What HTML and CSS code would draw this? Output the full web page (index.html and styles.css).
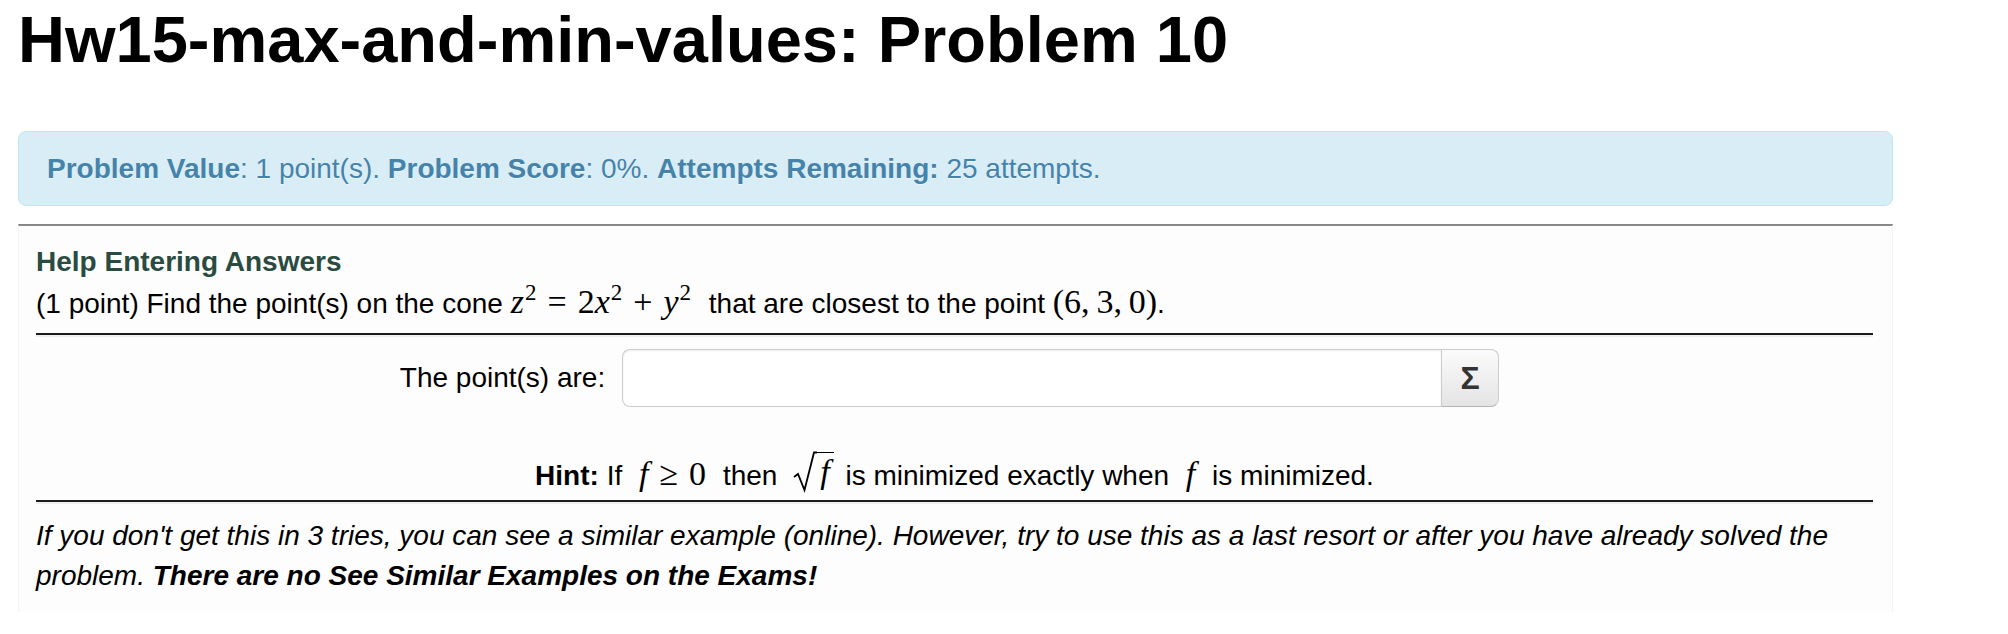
FILE: index.html
```html
<!DOCTYPE html>
<html>
<head>
<meta charset="utf-8">
<link rel="stylesheet" href="styles.css">
</head>
<body>
<div class="page">
  <h1 class="title">Hw15-max-and-min-values: Problem 10</h1>
  <div class="alert">
    <b>Problem Value</b>: 1 point(s). <b>Problem Score</b>: 0%. <b>Attempts Remaining:</b> 25 attempts.
  </div>
  <div class="problem">
    <div class="help">Help Entering Answers</div>
    <div class="line">(1 point) Find the point(s) on the cone <span class="math cone"><i>z</i><sup>2</sup><span class="op">=</span>2<i>x</i><sup>2</sup><span class="op">+</span><i>y</i><sup>2</sup></span> that are closest to the point <span class="math">(6,&thinsp;3,&thinsp;0)</span>.</div>
    <div class="rule"></div>
    <div class="answer">
      <label class="label">The point(s) are:</label>
      <div class="inputgroup">
        <div class="input"></div>
        <div class="sigma">Σ</div>
      </div>
    </div>
    <div class="hint"><b>Hint:</b> If <span class="math sp"><i>f</i><span class="op">≥</span>0</span> then <span class="math sqrt"><svg class="rad" width="24" height="44" viewBox="0 0 24 44"><path d="M1 26 L5 23 L11.5 39 L21 1.5 L24 1.5" fill="none" stroke="#000" stroke-width="1.8"/></svg><span class="under"><i>f</i></span></span> is minimized exactly when <span class="math sp"><i>f</i></span> is minimized.</div>
    <div class="rule"></div>
    <p class="note">If you don't get this in 3 tries, you can see a similar example (online). However, try to use this as a last resort or after you have already solved the problem. <b>There are no See Similar Examples on the Exams!</b></p>
  </div>
</div>
</body>
</html>
```

FILE: styles.css
```css
html, body {
  margin: 0;
  padding: 0;
  background: #fff;
}
body {
  font-family: "Liberation Sans", Arial, Helvetica, sans-serif;
  font-size: 28px;
  line-height: 40px;
  color: #000;
}
.page {
  padding: 4px 0 0 18px;
  width: 1875px;
}
.title {
  margin: 0;
  font-size: 65px;
  line-height: 72px;
  font-weight: bold;
  color: #000;
}
.alert {
  margin-top: 55px;
  background: #d9edf7;
  border: 1px solid #bce8f1;
  border-radius: 8px;
  padding: 17px 28px 16px 28px;
  color: #4583aa;
  text-shadow: 0 1px 0 rgba(255,255,255,0.5);
}
.alert b { font-weight: bold; }
.problem {
  margin-top: 18px;
  border-top: 2px solid #888;
  border-left: 1px solid #f3f3f3;
  border-right: 1px solid #f3f3f3;
  background: #fdfdfd;
  padding: 16px 19px 16px 17px;
}
.help {
  font-weight: bold;
  color: #2a4b3f;
}
.math {
  font-family: "Liberation Serif", "Times New Roman", serif;
  font-size: 34px;
}
.math i { font-style: italic; }
.math sup {
  font-size: 23px;
  line-height: 0;
  vertical-align: 13px;
  margin-left: 1px;
}
.cone { margin-right: 10px; }
.op { margin: 0 11px; font-style: normal; }
.sp { margin: 0 9px; }
.rule {
  height: 2px;
  background: #1c1c1c;
  border-bottom: 2px solid #efefef;
  margin-top: 9px;
}
.answer {
  display: flex;
  justify-content: center;
  align-items: center;
  margin-top: 12px;
  padding-right: 10px;
  gap: 17px;
}
.inputgroup {
  display: flex;
  height: 58px;
}
.input {
  width: 818px;
  height: 56px;
  border: 1px solid #ccc;
  border-right: none;
  border-radius: 8px 0 0 8px;
  background: #fff;
  box-shadow: inset 0 1px 2px rgba(0,0,0,0.08);
}
.sigma {
  width: 56px;
  height: 56px;
  border: 1px solid #ccc;
  border-bottom-color: #b5b5b5;
  border-radius: 0 8px 8px 0;
  background: linear-gradient(#fbfbfb, #e4e4e4);
  display: flex;
  align-items: center;
  justify-content: center;
  font-weight: bold;
  font-size: 32px;
  color: #333;
}
.hint {
  text-align: center;
  margin-top: 44px;
  height: 40px;
}
.sqrt {
  display: inline-flex;
  align-items: flex-start;
  vertical-align: -10px;
  height: 44px;
  margin: 0 4px 0 8px;
}
.rad { display: block; }
.under {
  border-top: 1.8px solid #000;
  padding: 0 4px 0 3px;
  line-height: 38px;
  margin-top: 1px;
}
.note {
  margin: 12px 0 0 0;
  font-style: italic;
}
.note b { font-weight: bold; }
```
